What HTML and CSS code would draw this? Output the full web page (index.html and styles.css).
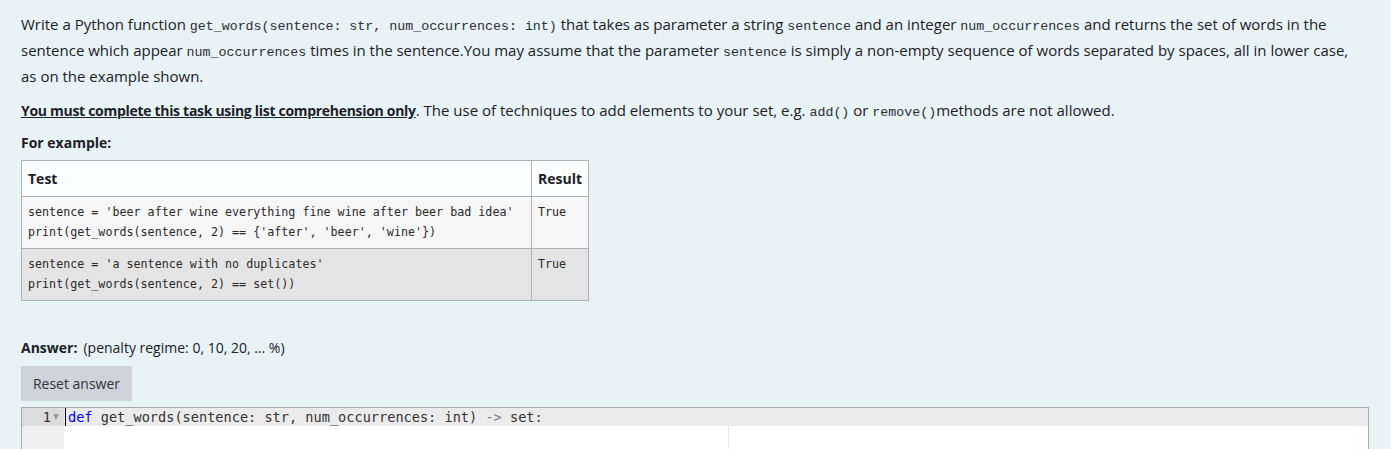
FILE: index.html
```html
<!DOCTYPE html>
<html>
<head>
<meta charset="utf-8">
<link rel="stylesheet" href="styles.css">
</head>
<body>
<div class="formulation">
  <p class="desc">Write a Python function <code class="ic">get_words(sentence: str, num_occurrences: int)</code> that takes as parameter a string <code class="ic">sentence</code> and an integer <code class="ic">num_occurrences</code> and returns the set of words in the<br>sentence which appear <code class="ic">num_occurrences</code> times in the sentence.You may assume that the parameter <code class="ic">sentence</code> is simply a non-empty sequence of words separated by spaces, all in lower case,<br>as on the example shown.</p>
  <p class="rule"><strong class="ul">You must complete this task using list comprehension only</strong>. The use of techniques to add elements to your set, e.g. <code class="ic">add()</code> or <code class="ic">remove()</code>methods are not allowed.</p>
  <h5 class="forex">For example:</h5>
  <table class="examples">
    <thead>
      <tr><th class="c-test">Test</th><th class="c-res">Result</th></tr>
    </thead>
    <tbody>
      <tr class="r0"><td class="c-test"><pre>sentence = 'beer after wine everything fine wine after beer bad idea'
print(get_words(sentence, 2) == {'after', 'beer', 'wine'})</pre></td><td class="c-res"><pre>True</pre></td></tr>
      <tr class="r1"><td class="c-test"><pre>sentence = 'a sentence with no duplicates'
print(get_words(sentence, 2) == set())</pre></td><td class="c-res"><pre>True</pre></td></tr>
    </tbody>
  </table>
  <div class="answer-label"><strong>Answer:</strong><span class="penalty">(penalty regime: 0, 10, 20, ... %)</span></div>
  <button class="reset">Reset answer</button>
  <div class="editor">
    <div class="gutter">
      <div class="gline active"><span class="lnum">1</span><span class="fold"></span></div>
    </div>
    <div class="content">
      <div class="print-margin"></div>
      <div class="cline active"><span class="cursor"></span><span class="kw">def</span> get_words(sentence: str, num_occurrences: int) <span class="op">-&gt;</span> set:</div>
    </div>
  </div>
</div>
</body>
</html>
```

FILE: styles.css
```css
html, body {
  margin: 0;
  padding: 0;
  background: #e7f3f5;
  overflow: hidden;
}

.formulation {
  background: #e7f3f5;
  color: #1d2125;
  font-family: "Open Sans", "Noto Sans", sans-serif;
  font-size: 15px;
  padding: 11px 21px 0 21px;
  height: 449px;
  box-sizing: border-box;
  border-right: 4px solid #eaf4f6;
}

.desc {
  margin: 0;
  line-height: 26px;
  white-space: nowrap;
}

.ic {
  font-family: "Liberation Mono", monospace;
  font-size: 13.3px;
  line-height: 1;
  color: #2b2f33;
}

.rule {
  margin: 8px 0 0 0;
  line-height: 26px;
  white-space: nowrap;
}

.ul {
  text-decoration: underline;
  font-size: 14px;
  letter-spacing: -0.3px;
}

.forex {
  margin: 6px 0 0 0;
  font-size: 14px;
  font-weight: 700;
  line-height: 26px;
}

.examples {
  margin-top: 4px;
  border-collapse: collapse;
  width: 568px;
}

.examples th, .examples td {
  border: 1px solid #b0b0b0;
  text-align: left;
  vertical-align: top;
}

.examples th {
  background: #fcfdff;
  font-weight: 700;
  font-size: 14px;
  height: 35px;
  padding: 0 6px;
  vertical-align: middle;
}

.examples td {
  padding: 5px 6px 6px 6px;
}

.examples td.c-test {
  width: 497px;
}

.examples tr.r0 td {
  background: #f6f6f6;
}

.examples tr.r1 td {
  background: #e4e4e4;
}

.examples pre {
  margin: 0;
  font-family: "DejaVu Sans Mono", monospace;
  font-size: 11.7px;
  line-height: 20px;
  color: #2a2a2a;
}

.answer-label {
  margin-top: 35px;
  line-height: 22px;
}

.answer-label strong {
  font-weight: 700;
  font-size: 14px;
}

.penalty {
  margin-left: 6px;
  font-size: 14px;
}

.reset {
  display: block;
  margin-top: 7px;
  width: 111px;
  height: 35px;
  border: none;
  background: #ced4da;
  color: #333;
  font-family: "Open Sans", "Noto Sans", sans-serif;
  font-size: 14px;
  padding: 0;
}

.editor {
  margin-top: 6px;
  width: 1346px;
  height: 60px;
  border: 1px solid #a9a9a9;
  display: flex;
  background: #fff;
  font-family: "DejaVu Sans Mono", monospace;
  font-size: 13.6px;
}

.gutter {
  width: 42px;
  background: #f0f0f0;
  color: #333;
}

.gline {
  height: 18px;
  line-height: 18px;
  display: flex;
  justify-content: flex-end;
  align-items: center;
  padding-right: 5px;
}

.gline.active {
  background: #dcdcdc;
}

.fold {
  width: 0;
  height: 0;
  border-left: 3px solid transparent;
  border-right: 3px solid transparent;
  border-top: 6px solid #999;
  margin-left: 2px;
}

.content {
  flex: 1;
  position: relative;
}

.print-margin {
  position: absolute;
  left: 664px;
  top: 0;
  bottom: 0;
  width: 1px;
  background: #e8e8e8;
}

.cline {
  height: 18px;
  line-height: 18px;
  padding-left: 4px;
  color: #333;
  white-space: pre;
  position: relative;
}

.cline.active {
  background: #ebebeb;
}

.cursor {
  position: absolute;
  left: 1px;
  top: 0;
  width: 1px;
  height: 18px;
  background: #000;
}

.kw {
  color: #0000ff;
}

.op {
  color: #777;
}
```
